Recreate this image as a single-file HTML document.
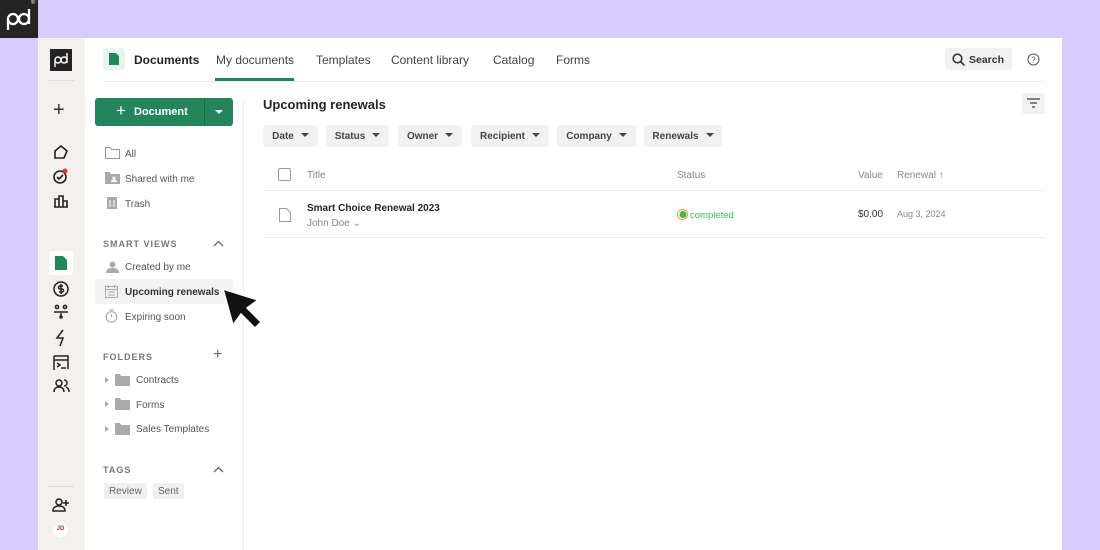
<!DOCTYPE html>
<html><head><style>
*{box-sizing:border-box;margin:0;padding:0}
body{width:1100px;height:550px;background:#d6cdfc;font-family:"Liberation Sans",sans-serif;position:relative;overflow:hidden;color:#242424}
.a{position:absolute}
.logo{left:0;top:0;width:38px;height:38px;background:#242424}
.app{left:38px;top:38px;width:1024px;height:512px;background:#fff}
.rail{left:38px;top:38px;width:47px;height:512px;background:#f3f0ed}
.t{position:absolute;white-space:nowrap}
.s{font-size:10px;color:#555}
.hdr{font-size:9px;letter-spacing:1px;color:#777;font-weight:bold}
.chip{position:absolute;top:125px;height:22px;background:#f1f1f1;border-radius:3px;font-size:10px;font-weight:bold;color:#444;padding:6px 0 0;text-align:center}
.chip:after{content:"";display:inline-block;margin-left:7px;border:4px solid transparent;border-top:4px solid #444;border-bottom:0;vertical-align:2px}
.g{color:#888}
</style></head><body>
<div class="a logo"><svg width="38" height="38" fill="none" stroke="#fff" stroke-width="2.3"><circle cx="13" cy="19" r="5"/><path d="M8 19v11"/><circle cx="24" cy="19" r="5"/><path d="M29 24V9"/></svg><span class="t" style="left:31px;top:0;font-size:6px;color:#fff">®</span></div>
<div class="a app"></div>
<div class="a rail"></div>
<div class="a" style="left:50px;top:49px;width:22px;height:22px;background:#242424"><svg width="22" height="22" fill="none" stroke="#fff" stroke-width="1.4"><circle cx="8" cy="11" r="3"/><path d="M5 11v7"/><circle cx="14" cy="11" r="3"/><path d="M17 14V4"/></svg></div>
<div class="a" style="left:48px;top:80px;width:26px;height:1px;background:#ddd"></div>
<div class="t" style="left:53px;top:99px;font-size:20px;color:#333">+</div>
<svg class="a" style="left:52px;top:143px" width="18" height="150" fill="none" stroke="#222" stroke-width="1.6">
<path d="M3 8l6-5 6 5-3 7H3z"/>
<circle cx="8" cy="34" r="6"/><path d="M5 34l2 2 4-4"/><circle cx="13" cy="28" r="2.5" fill="#e33" stroke="none"/>
<path d="M3 64v-8h4v8M7 64v-11h4v11M11 64v-6h4v6M2 64h14"/>
</svg>
<div class="a" style="left:49px;top:251px;width:24px;height:24px;background:#fff;border-radius:3px"></div>
<svg class="a" style="left:55px;top:256px" width="12" height="14"><path d="M0 0h8l4 4v10H0z" fill="#25855a"/></svg>
<svg class="a" style="left:52px;top:280px" width="18" height="120" fill="none" stroke="#222" stroke-width="1.5">
<circle cx="9" cy="9" r="7"/><path d="M11 6H8a1.5 1.5 0 0 0 0 3h2a1.5 1.5 0 0 1 0 3H7M9 4v10"/>
<circle cx="5" cy="27" r="1.6"/><circle cx="13" cy="27" r="1.6"/><path d="M2 32h14M9 33v3"/><circle cx="9" cy="37" r="1"/>
<path d="M11 50l-6 8h6l-3 8"/>
<path d="M2 76h14v13M2 76v14M2 80h14M5 83l3 2-3 2M9 88h5"/>
<circle cx="7" cy="103" r="3"/><path d="M2 112c0-4 3-5 5-5s5 1 5 5M12 100a3 3 0 0 1 0 6M14 107c2 1 3 2 3 5"/>
</svg>
<div class="a" style="left:48px;top:486px;width:26px;height:1px;background:#ddd"></div>
<svg class="a" style="left:52px;top:497px" width="18" height="16" fill="none" stroke="#222" stroke-width="1.5"><circle cx="7" cy="5" r="3"/><path d="M1 14c0-4 3-5 6-5s6 1 6 5zM14 3v6M11 6h6"/></svg>
<div class="a" style="left:52px;top:521px;width:17px;height:17px;border-radius:50%;background:#fff;border:1px solid #eee;font-size:6px;color:#b33;text-align:center;line-height:15px;font-weight:bold">JD</div>

<div class="a" style="left:103px;top:48px;width:22px;height:22px;background:#e9f4ee;border-radius:3px"></div>
<svg class="a" style="left:109px;top:53px" width="10" height="12"><path d="M0 0h7l3 3v9H0z" fill="#25855a"/></svg>
<div class="t" style="left:134px;top:53px;font-size:12px;font-weight:bold">Documents</div>
<div class="t" style="left:216px;top:53px;font-size:12px;color:#444">My documents</div>
<div class="a" style="left:215px;top:78px;width:79px;height:3px;background:#25855a"></div>
<div class="t" style="left:316px;top:53px;font-size:12px;color:#444">Templates</div>
<div class="t" style="left:391px;top:53px;font-size:12px;color:#444">Content library</div>
<div class="t" style="left:493px;top:53px;font-size:12px;color:#444">Catalog</div>
<div class="t" style="left:556px;top:53px;font-size:12px;color:#444">Forms</div>
<div class="a" style="left:103px;top:81px;width:942px;height:1px;background:#eee"></div>
<div class="a" style="left:945px;top:48px;width:67px;height:22px;background:#f1f1f1;border-radius:3px"></div>
<svg class="a" style="left:952px;top:53px" width="13" height="13" fill="none" stroke="#333" stroke-width="1.6"><circle cx="5.5" cy="5.5" r="4.3"/><path d="M8.5 8.5l4 4"/></svg>
<div class="t" style="left:969px;top:54px;font-size:10.5px;font-weight:bold;color:#333">Search</div>
<svg class="a" style="left:1027px;top:53px" width="13" height="13"><circle cx="6.5" cy="6.5" r="5.5" fill="none" stroke="#555" stroke-width="1"/><text x="6.5" y="9.5" font-size="8" text-anchor="middle" fill="#555" font-family="Liberation Sans">?</text></svg>

<div class="a" style="left:95px;top:98px;width:138px;height:28px;background:#25855a;border-radius:3px"></div>
<div class="a" style="left:204px;top:98px;width:1px;height:28px;background:#1d6b48"></div>
<div class="t" style="left:116px;top:101px;font-size:17px;color:#fff">+</div>
<div class="t" style="left:134px;top:106px;font-size:11px;font-weight:bold;color:#fff">Document</div>
<div class="a" style="left:215px;top:110px;border:4px solid transparent;border-top:4px solid #fff;border-bottom:0"></div>
<div class="a" style="left:243px;top:98px;width:1px;height:452px;background:#eee"></div>

<svg class="a" style="left:105px;top:147px" width="15" height="12" fill="none" stroke="#999"><path d="M.5 .5h5l1 2h8v9H.5z"/></svg>
<div class="t s" style="left:125px;top:149px">All</div>
<svg class="a" style="left:105px;top:172px" width="15" height="12"><path d="M0 0h5l1 2h9v10H0z" fill="#aaa"/><circle cx="9" cy="6" r="1.5" fill="#fff"/><path d="M6 10c0-2 2-2.5 3-2.5s3 .5 3 2.5z" fill="#fff"/></svg>
<div class="t s" style="left:125px;top:174px">Shared with me</div>
<svg class="a" style="left:107px;top:197px" width="10" height="12"><rect width="10" height="12" fill="#aaa"/><path d="M3 3v7M7 3v7" stroke="#fff"/></svg>
<div class="t s" style="left:125px;top:199px">Trash</div>

<div class="t hdr" style="left:103px;top:239px">SMART VIEWS</div>
<svg class="a" style="left:213px;top:240px" width="11" height="7" fill="none" stroke="#666" stroke-width="1.3"><path d="M1 6l4.5-4.5L10 6"/></svg>
<svg class="a" style="left:106px;top:261px" width="13" height="12"><circle cx="6.5" cy="3.5" r="3" fill="#aaa"/><path d="M0 12c0-4 3-5 6.5-5s6.5 1 6.5 5z" fill="#aaa"/></svg>
<div class="t s" style="left:125px;top:262px">Created by me</div>
<div class="a" style="left:95px;top:279px;width:138px;height:25px;background:#f3f3f3;border-radius:3px"></div>
<svg class="a" style="left:105px;top:285px" width="13" height="13" fill="none" stroke="#aaa"><rect x=".5" y="1.5" width="12" height="11"/><path d="M.5 4.5h12M3.5 0v3M9.5 0v3M3 7h7M3 10h7" /></svg>
<div class="t" style="left:125px;top:287px;font-size:10px;font-weight:bold;color:#333">Upcoming renewals</div>
<svg class="a" style="left:105px;top:309px" width="13" height="14" fill="none" stroke="#aaa" stroke-width="1.2"><circle cx="6.5" cy="8" r="5.3"/><path d="M4.5 1h4M6.5 8V5"/></svg>
<div class="t s" style="left:125px;top:312px">Expiring soon</div>

<div class="t hdr" style="left:103px;top:352px">FOLDERS</div>
<div class="t" style="left:213px;top:346px;font-size:16px;color:#666">+</div>
<div class="a" style="left:105px;top:377px;border:3px solid transparent;border-left:4px solid #aaa;border-right:0"></div>
<svg class="a" style="left:115px;top:374px" width="15" height="12"><path d="M0 0h5l1 2h9v10H0z" fill="#aaa"/></svg>
<div class="t s" style="left:136px;top:375px">Contracts</div>
<div class="a" style="left:105px;top:401px;border:3px solid transparent;border-left:4px solid #aaa;border-right:0"></div>
<svg class="a" style="left:115px;top:398px" width="15" height="12"><path d="M0 0h5l1 2h9v10H0z" fill="#aaa"/></svg>
<div class="t s" style="left:136px;top:400px">Forms</div>
<div class="a" style="left:105px;top:426px;border:3px solid transparent;border-left:4px solid #aaa;border-right:0"></div>
<svg class="a" style="left:115px;top:423px" width="15" height="12"><path d="M0 0h5l1 2h9v10H0z" fill="#aaa"/></svg>
<div class="t s" style="left:136px;top:424px">Sales Templates</div>

<div class="t hdr" style="left:103px;top:465px">TAGS</div>
<svg class="a" style="left:213px;top:466px" width="11" height="7" fill="none" stroke="#666" stroke-width="1.3"><path d="M1 6l4.5-4.5L10 6"/></svg>
<div class="t" style="left:104px;top:483px;height:16px;padding:3px 5px;background:#f0f0f0;font-size:10px;color:#666">Review</div>
<div class="t" style="left:153px;top:483px;height:16px;padding:3px 5px;background:#f0f0f0;font-size:10px;color:#666">Sent</div>

<svg class="a" style="left:220px;top:286px" width="50" height="50"><path d="M3 3l10 36 8-11 14 14 6-6-14-14 11-8z" fill="#111" stroke="#fff" stroke-width="1.5"/></svg>

<div class="t" style="left:263px;top:97px;font-size:13px;font-weight:bold">Upcoming renewals</div>
<div class="a" style="left:1022px;top:93px;width:23px;height:21px;background:#f1f1f1;border-radius:3px"></div>
<svg class="a" style="left:1027px;top:98px" width="13" height="10" stroke="#444" stroke-width="1.3"><path d="M0 1h13M3 5h7M5 9h3"/></svg>
<div class="chip" style="left:263px;width:55px">Date</div>
<div class="chip" style="left:326px;width:63px">Status</div>
<div class="chip" style="left:398px;width:64px">Owner</div>
<div class="chip" style="left:471px;width:78px">Recipient</div>
<div class="chip" style="left:557px;width:79px">Company</div>
<div class="chip" style="left:644px;width:78px">Renewals</div>
<div class="a" style="left:278px;top:168px;width:13px;height:13px;border:1px solid #999;border-radius:2px"></div>
<div class="t s g" style="left:307px;top:170px">Title</div>
<div class="t s g" style="left:677px;top:170px">Status</div>
<div class="t s g" style="left:858px;top:170px">Value</div>
<div class="t s g" style="left:897px;top:170px">Renewal ↑</div>
<div class="a" style="left:263px;top:190px;width:782px;height:1px;background:#eee"></div>
<svg class="a" style="left:279px;top:208px" width="12" height="14" fill="none" stroke="#999"><path d="M.5 .5h7l4 4v9h-11z"/></svg>
<div class="t" style="left:307px;top:203px;font-size:10px;font-weight:bold">Smart Choice Renewal 2023</div>
<div class="t s g" style="left:307px;top:218px">John Doe ⌄</div>
<svg class="a" style="left:677px;top:209px" width="11" height="11"><circle cx="5.5" cy="5.5" r="5" fill="none" stroke="#f0a040" stroke-width="1"/><circle cx="6" cy="5.5" r="3.5" fill="#3cba5a"/></svg>
<div class="t" style="left:690px;top:210px;font-size:9.5px;color:#3cba5a">completed</div>
<div class="t" style="left:858px;top:209px;font-size:10px;color:#333">$0.00</div>
<div class="t" style="left:897px;top:209px;font-size:9px;color:#888">Aug 3, 2024</div>
<div class="a" style="left:263px;top:237px;width:782px;height:1px;background:#eee"></div>
</body></html>
